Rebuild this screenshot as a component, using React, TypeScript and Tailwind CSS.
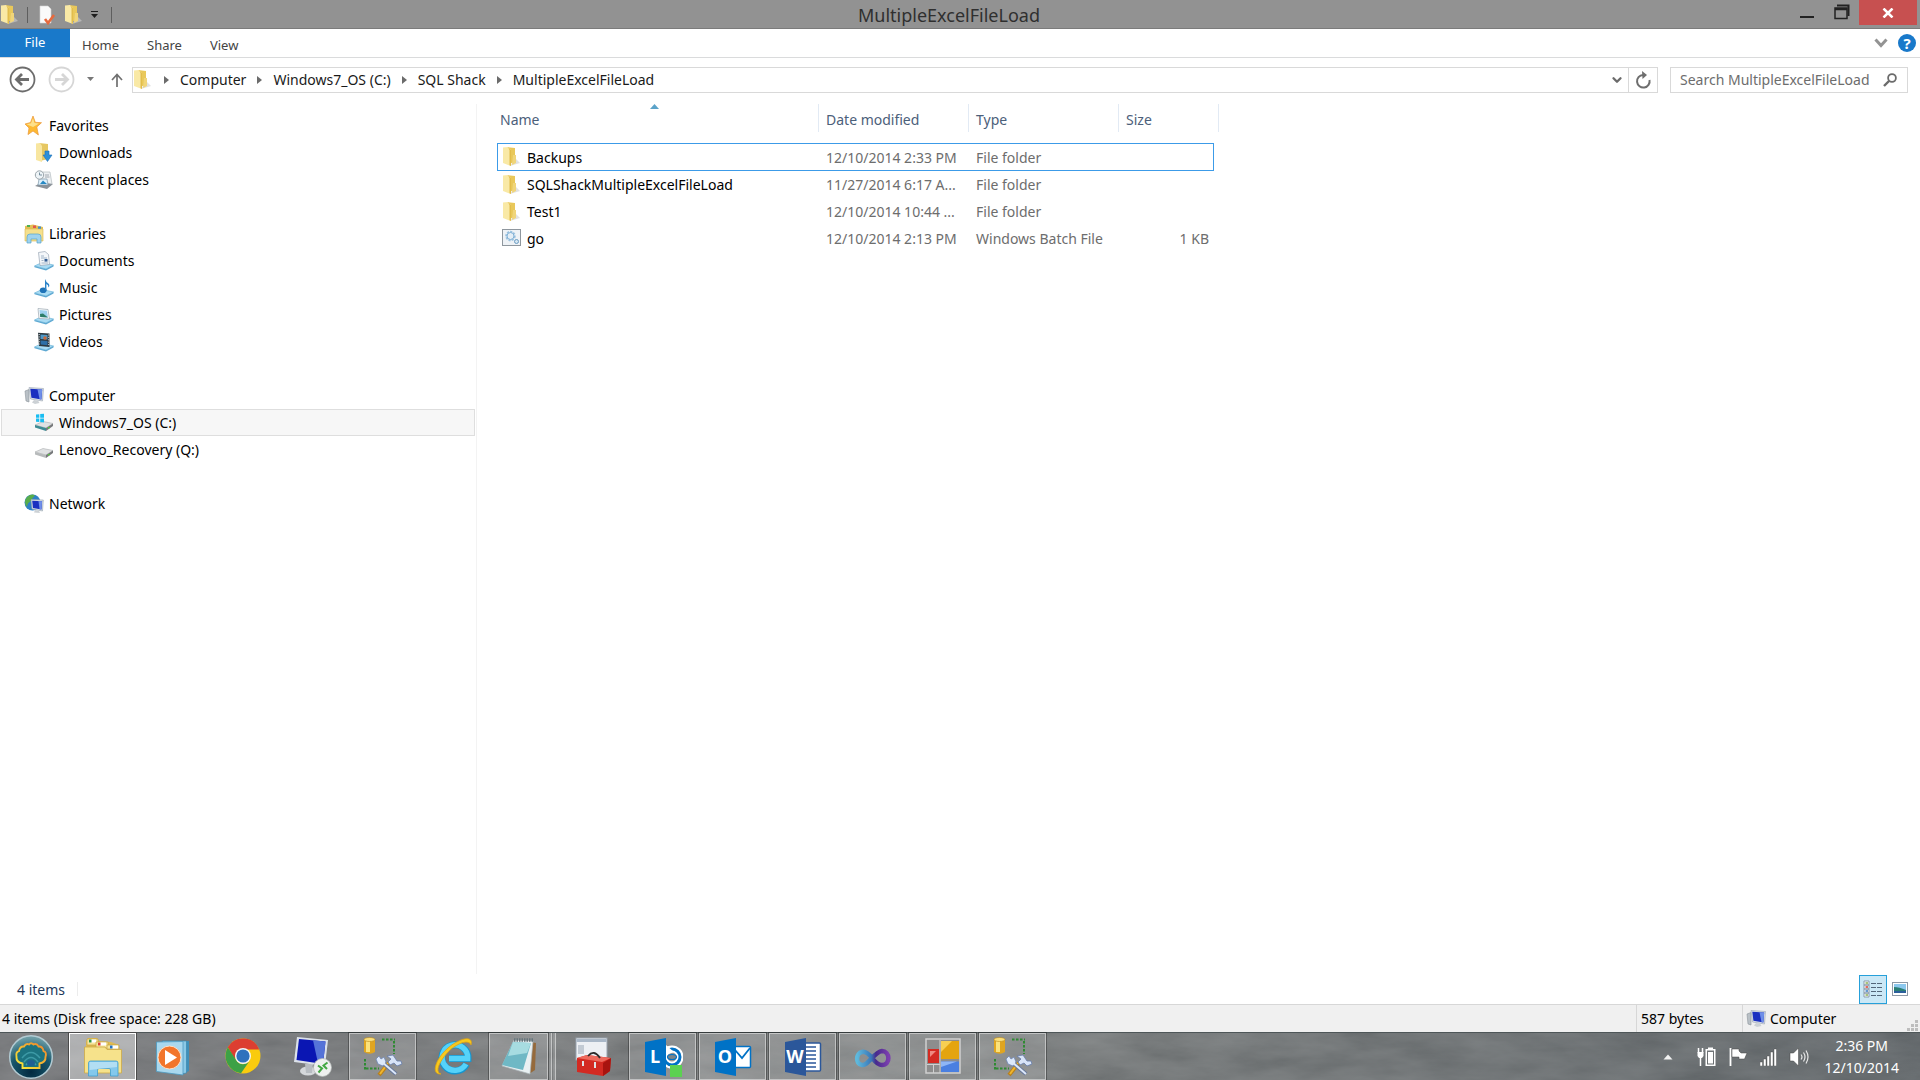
import type { ReactNode } from "react";
import { ChevronDown } from "lucide-react";

function FolderIcon() {
  return (
    <svg width="20" height="20" viewBox="0 0 20 20">
      <path d="M8 19 L18 16 L13 11 Z" fill="#cfcfcf" opacity="0.6" />
      <path d="M5 0 L13 1 L13 15 L6 17 Z" fill="#e9c85a" />
      <path d="M11 8 L14 8 L14 16 L10 18 Z" fill="#f0d57a" />
      <path d="M1 0.5 L6 0 L9 3 L9 19 L1 16 Z" fill="#f9e9a6" />
      <path d="M6 0 L9 3 L9 19 L7.5 18.3 L7.5 3 Z" fill="#e2bd4c" />
    </svg>
  );
}

function BatchIcon() {
  return (
    <svg width="20" height="20" viewBox="0 0 20 20">
      <rect x="0.5" y="0.5" width="18" height="16" fill="#eef2f6" stroke="#8f979e" />
      <circle cx="8.5" cy="7" r="4" fill="none" stroke="#9cc3e0" strokeWidth="2.5" strokeDasharray="2 1" />
      <circle cx="8.5" cy="7" r="3.5" fill="#e4eef6" stroke="#7fb0d6" />
      <circle cx="14.5" cy="12.5" r="2" fill="#d5e6f2" stroke="#6c9cc2" />
    </svg>
  );
}

function StarIcon() {
  return (
    <svg width="20" height="20" viewBox="0 0 20 20">
      <path d="M9 0 L11.3 6.3 L17.5 6.7 L12.8 11 L14.4 19 L9 15 L4 18.6 L5 12 L1 8 L6.5 6.5 Z" fill="#fdb932" stroke="#e9973a" strokeWidth="0.7" />
      <path d="M9 2 L10.5 7 L15 7.5 L9 11 L2.5 8.3 L7 7.2 Z" fill="#fde08a" />
    </svg>
  );
}

function DownloadsIcon() {
  return (
    <svg width="20" height="20" viewBox="0 0 20 20">
      <path d="M5 0 L14 1 L14 16 L6 18 Z" fill="#e6c762" />
      <path d="M2 0.5 L6 0 L8 3 L8 19 L2 17 Z" fill="#f8e6a0" />
      <path d="M11 8 H15 V12 H18 L13.5 18.5 L9 12 H11 Z" fill="#2d8fd8" stroke="#1c6fb5" strokeWidth="0.6" />
    </svg>
  );
}

function RecentIcon() {
  return (
    <svg width="20" height="20" viewBox="0 0 20 20">
      <path d="M1 16 L8 12 L19 14 L13 19 Z" fill="#8a9198" />
      <path d="M8 2 H16 L18 14 L8 12 Z" fill="#eef1f3" stroke="#a9b1b7" strokeWidth="0.6" />
      <path d="M11 5 H15 M11 7 H15.5" stroke="#8d979e" strokeWidth="0.8" />
      <path d="M5 9 H13 L14 15 H4 Z" fill="#dff0fb" stroke="#7c97a8" strokeWidth="0.7" />
      <path d="M6 14 L9 10.5 L13 14 Z" fill="#2789c4" />
      <circle cx="5.5" cy="5" r="4.2" fill="#eef4f7" stroke="#9ba5ab" />
      <path d="M5.5 2.5 V5 H8" fill="none" stroke="#6c8796" strokeWidth="0.9" />
    </svg>
  );
}

function LibrariesIcon() {
  return (
    <svg width="20" height="20" viewBox="0 0 20 20">
      <path d="M1 2 L9 0.5 L19 3 V17 H1 Z" fill="#e3bf55" />
      <path d="M3 1 H6 V3 H3 Z" fill="#4caf50" />
      <path d="M9 1.5 H12 V4 H9 Z" fill="#e2574c" />
      <path d="M14 2.5 H17 V5 H14 Z" fill="#3f8fd0" />
      <path d="M1 5 H19 V17 H1 Z" fill="#f5e08d" stroke="#d9b64f" strokeWidth="0.6" />
      <path d="M3 19 V13 Q3 10 6 10 H14 Q17 10 17 13 V19 H13 V15 H7 V19 Z" fill="#9fd3ef" stroke="#58a4cc" strokeWidth="0.7" />
    </svg>
  );
}

function Tray() {
  return (
    <>
      <path d="M0.5 15 L8 11.5 L19.5 14 L12 18 Z" fill="#a9dcf4" stroke="#6fb6da" strokeWidth="0.7" />
      <path d="M0.5 15 L12 18 L19.5 14 V15.5 L12 19.5 L0.5 16.2 Z" fill="#5ea9d2" />
    </>
  );
}

function DocumentsIcon() {
  return (
    <svg width="20" height="20" viewBox="0 0 20 20">
      <Tray />
      <path d="M4.5 1.5 L11 0.5 L14.5 3.5 L15.5 13.5 L6 14.5 Z" fill="#f4f7fa" stroke="#98a5b3" strokeWidth="0.7" />
      <path d="M7 5 H10 M7 7 H13 M7.5 9.5 H9.5 M7.5 12 H14" stroke="#8ea4bb" strokeWidth="0.8" />
      <rect x="10.5" y="8" width="3" height="2.6" fill="#315c93" />
    </svg>
  );
}

function MusicIcon() {
  return (
    <svg width="20" height="20" viewBox="0 0 20 20">
      <Tray />
      <ellipse cx="9.2" cy="12.3" rx="3.4" ry="2.8" fill="#1e73b8" />
      <path d="M11 12 V1 Q12 4.5 15 6 Q16 8 14.5 9.5 Q14.5 6.8 12.4 6 V12 Z" fill="#2a83c9" />
    </svg>
  );
}

function PicturesIcon() {
  return (
    <svg width="20" height="20" viewBox="0 0 20 20">
      <Tray />
      <path d="M4 3.5 L14 4.5 L15.5 14 L5 13.5 Z" fill="#f7f9fa" stroke="#9ba8b1" strokeWidth="0.7" />
      <path d="M5.5 5 L13 5.7 L14 12.6 L6.2 12 Z" fill="#9ed0ee" />
      <path d="M6 9 L9 8.5 L14 12.6 L6.2 12 Z" fill="#2d7d68" />
    </svg>
  );
}

function VideosIcon() {
  return (
    <svg width="20" height="20" viewBox="0 0 20 20">
      <Tray />
      <path d="M4 0.8 L15.5 1.5 V15 L5 14 Z" fill="#2d3940" />
      <path d="M6.5 2.5 L13.5 3 V7.5 L6.5 7 Z" fill="#4d98c8" />
      <path d="M6.5 8.5 L13.5 9 V13.2 L6.7 12.6 Z" fill="#2e6fa6" />
      <circle cx="11" cy="6" r="1.8" fill="#c96a3c" />
      <path d="M5.2 2 V14 M14.7 2.5 V14.5" stroke="#dfe5e8" strokeDasharray="1 1.4" />
    </svg>
  );
}

function ComputerIcon() {
  return (
    <svg width="20" height="20" viewBox="0 0 20 20">
      <path d="M1 5 L5 3.5 V16 L2 15 Z" fill="#b9c0c6" stroke="#8b949b" strokeWidth="0.6" />
      <path d="M5 1.5 L19.5 2.5 L18.5 15 L6.5 13 Z" fill="#d9dfe6" stroke="#9aa5b1" strokeWidth="0.6" />
      <path d="M6.3 2.8 L18.2 3.6 L17.4 13.4 L7.4 11.8 Z" fill="#1a2fc0" />
      <path d="M13.5 3.3 L18.2 3.6 L17.4 13.4 L15.5 13.1 Z" fill="#6f8fe8" />
      <path d="M10 14 L14 14.6 L15.5 17 L11 18 L8 16.5 Z" fill="#ccd1d5" />
    </svg>
  );
}

function DriveIcon({ windows = false }: { windows?: boolean }) {
  return (
    <svg width="20" height="20" viewBox="0 0 20 20">
      <path d="M1 12 L9 8.5 L19 10.5 L12 15 Z" fill="#e0e2e3" stroke="#a9adaf" strokeWidth="0.6" />
      <path d="M1 12 L12 15 V18 L1 14.5 Z" fill={windows ? "#3f8b93" : "#b7babb"} />
      <path d="M12 15 L19 10.5 V13 L12 18 Z" fill="#77797b" />
      <rect x="14" y="14" width="1.6" height="1.4" fill="#55d13a" />
      {windows && (
        <path d="M2 1.5 L5.3 1.2 V4.8 H2 Z M6.2 1 L10 0.7 V4.8 H6.2 Z M2 5.6 H5.3 V9 L2 8.7 Z M6.2 5.6 H10 V9.5 L6.2 9.1 Z" fill="#19bdf2" />
      )}
    </svg>
  );
}

function NetworkIcon() {
  return (
    <svg width="20" height="20" viewBox="0 0 20 20">
      <circle cx="8.5" cy="8.5" r="8" fill="#2f80c6" />
      <path d="M3 3 Q8 -1 11 1.5 Q8 4 7 7 Q3 9 3 13 Q-1 8 3 3 Z" fill="#58ad4b" />
      <path d="M7 5.5 L19.3 6 L18.5 17 L8 15 Z" fill="#d9dfe6" stroke="#96a2ad" strokeWidth="0.6" />
      <path d="M8.2 6.8 L18.1 7.2 L17.5 15.6 L9 14 Z" fill="#1a2fc0" />
      <path d="M14.5 7 L18.1 7.2 L17.5 15.6 L15.5 15.2 Z" fill="#6f8fe8" />
      <path d="M11 16 L15 16.7 L16 19 L10 18.5 Z" fill="#ccd1d5" />
    </svg>
  );
}

function PropertiesIcon() {
  return (
    <svg width="18" height="20" viewBox="0 0 18 20">
      <path d="M2 1 H10 L13 4 V18 H2 Z" fill="#fafafa" stroke="#d3d3d3" strokeWidth="0.6" />
      <path d="M7 14 L10 18 L16 10" fill="none" stroke="#e8693c" strokeWidth="2.6" />
    </svg>
  );
}

/* taskbar program icons, all on a 40px grid */

function StartOrb() {
  return (
    <svg width="46" height="46" viewBox="0 0 46 46">
      <defs>
        <radialGradient id="orb" cx="50%" cy="85%" r="80%">
          <stop offset="0" stopColor="#032a40" />
          <stop offset="0.6" stopColor="#17566b" />
          <stop offset="1" stopColor="#6d9da6" />
        </radialGradient>
        <linearGradient id="shell" x1="0" y1="1" x2="1" y2="0">
          <stop offset="0" stopColor="#f6ee3c" />
          <stop offset="1" stopColor="#f0822a" />
        </linearGradient>
      </defs>
      <circle cx="23" cy="23" r="21.3" fill="url(#orb)" stroke="#b3cbd3" strokeWidth="1.5" />
      <path d="M14.5 34 V29.5 Q8 28 8.5 23 Q7.5 18 11 17 Q12 12 16 12.5 Q18 9 21 10.5 Q23 8 25.5 10.5 Q29 9 30.5 12.5 Q34.5 12 35.5 17 Q39 18 37.5 23 Q38 28 31.5 29.5 V34 Z" fill="#1c7380" stroke="url(#shell)" strokeWidth="1.9" />
      <path d="M14 24 Q23 13 32 24 M16 28 Q23 19 30 28 M18 31 Q23 24 28 31" fill="none" stroke="#3d9aa6" strokeWidth="1.5" />
      <ellipse cx="23" cy="29" rx="4" ry="3" fill="#1f5f93" />
    </svg>
  );
}

function ExplorerIcon() {
  return (
    <svg width="40" height="40" viewBox="0 0 40 40">
      <path d="M3 5 L5 1 H14 L16 4 L28 5 L36 8 V34 H3 Z" fill="#dfbb52" />
      <path d="M4 2 H15 V8 H4 Z" fill="#f5e49b" stroke="#c9a341" strokeWidth="0.7" />
      <rect x="6" y="2.5" width="7" height="3" fill="#fff" />
      <rect x="6" y="2.5" width="2.5" height="3" fill="#2d9442" />
      <path d="M13 5 H25 V11 H13 Z" fill="#f5e49b" stroke="#c9a341" strokeWidth="0.7" />
      <rect x="15" y="5.5" width="8" height="3" fill="#fff" />
      <rect x="15" y="5.5" width="2.5" height="3" fill="#dd3d2c" />
      <path d="M24 8 H36 V12 H24 Z" fill="#f5e49b" stroke="#c9a341" strokeWidth="0.7" />
      <rect x="27" y="8.5" width="8" height="3" fill="#fff" />
      <rect x="27" y="8.5" width="2.5" height="3" fill="#2573bf" />
      <path d="M1.5 10 H22 L24 12.5 H38.5 V36 H1.5 Z" fill="#f6e28b" stroke="#cda947" strokeWidth="0.8" />
      <path d="M5.5 39 V26 Q5.5 24 7.5 24 H33 Q35 24 35 26 V39 H27.5 V33 Q27.5 31.5 26 31.5 H16 Q14.5 31.5 14.5 33 V39 Z" fill="#84c8ec" stroke="#3f9ed0" strokeWidth="0.8" />
      <path d="M6.5 25 H34 V30 L6.5 33 Z" fill="#c6e7f7" opacity="0.7" />
    </svg>
  );
}

function MediaPlayerIcon() {
  return (
    <svg width="40" height="40" viewBox="0 0 40 40">
      <path d="M12 4 H36 V34 L30 37 Z" fill="#3f8fb8" />
      <path d="M9 4 H33.5 V36 L28 37 Z" fill="#8cc9e6" stroke="#3b87ad" strokeWidth="0.7" />
      <path d="M3.5 5 L30 4.5 V38 L3.5 34.5 Z" fill="#a9d8ee" stroke="#4c9ac1" strokeWidth="0.8" />
      <circle cx="16.5" cy="20.5" r="11.5" fill="#f2752b" stroke="#fde2cc" strokeWidth="1" />
      <path d="M12 13 L24 20.5 L12 28 Z" fill="#fff" />
    </svg>
  );
}

function ChromeIcon() {
  return (
    <svg width="40" height="40" viewBox="0 0 40 40">
      <circle cx="20" cy="19" r="17.5" fill="#f9cb0d" />
      <path d="M4.8 10.3 A17.5 17.5 0 0 1 36.3 12.5 H20 A8 8 0 0 0 12.8 23.5 Z" fill="#dc3e31" />
      <path d="M4.8 10.3 A17.5 17.5 0 0 0 18 36.3 L26.5 24 A8 8 0 0 1 12.8 22.5 Z" fill="#3da146" />
      <circle cx="20" cy="19" r="8" fill="#f3f6f8" />
      <circle cx="20" cy="19" r="6.6" fill="#2f72bd" />
    </svg>
  );
}

function RemoteDesktopIcon() {
  return (
    <svg width="40" height="40" viewBox="0 0 40 40">
      <ellipse cx="15" cy="34" rx="8" ry="4.5" fill="#d5d8db" />
      <path d="M12 27 H20 L19 36 H13 Z" fill="#b8bdc2" />
      <path d="M4 0 L35 3 L32 29 L1 25 Z" fill="#dce2ea" />
      <path d="M6 2 L32.5 4.5 L30 27 L3.5 23 Z" fill="#0a16b3" />
      <path d="M20 3.3 L32.5 4.5 L30 27 L25 26.2 Z" fill="#5573d8" />
      <circle cx="29.5" cy="30.5" r="9" fill="#eef0ef" stroke="#b4b9b8" strokeWidth="0.7" />
      <path d="M25 28.5 L29 31.5 L25.5 35.5 M34.5 25.5 L30.5 28.5 L34 32" fill="none" stroke="#43a843" strokeWidth="2" />
    </svg>
  );
}

function SqlStudioIcon() {
  return (
    <svg width="40" height="40" viewBox="0 0 40 40">
      <path d="M1 2 V15 Q7 18.5 12 15 V2 Z" fill="#e0a520" />
      <path d="M3 3 V15 H7 V3 Z" fill="#fbe27c" />
      <ellipse cx="6.5" cy="2.5" rx="5.5" ry="2" fill="#fbdf7a" stroke="#b88717" strokeWidth="0.6" />
      <path d="M19 2.5 H32 M31 4 V17 M2 22 V33 M3 31.5 H16" fill="none" stroke="#2f8a33" strokeWidth="2" strokeDasharray="2.5 1.5" />
      <path d="M26 26 L16 38" stroke="#b9801a" strokeWidth="4" />
      <path d="M25 26 L17 37" stroke="#efb62e" strokeWidth="2" />
      <path d="M20 26 L33 37" stroke="#66779a" strokeWidth="4" />
      <path d="M13 22 L16 19 L18 22 L21 20 L23 25 L20 29 L15 27 Z" fill="#dce8fa" stroke="#6e86b5" strokeWidth="0.8" />
      <path d="M19 25 L33 37" stroke="#dce8fa" strokeWidth="2" />
      <path d="M24 19 L30 18 L34 24 L38 24 L39 27 L34 29 L31 26 L27 28 L25 25 L28 22 Z" fill="#d8e4f7" stroke="#667ca9" strokeWidth="0.8" />
    </svg>
  );
}

function InternetExplorerIcon() {
  return (
    <svg width="40" height="40" viewBox="0 0 40 40">
      <path d="M33.5 27 A13 13 0 1 1 35 21.5 H16" fill="none" stroke="#1595cf" strokeWidth="7" />
      <path d="M33 27 A12.8 12.8 0 1 1 34.7 21.5 H16" fill="none" stroke="#55d3fa" strokeWidth="5.4" />
      <path d="M8 37 C-3 38 3 21 15 11 C25 2 41 -3 38 8 C36 2 25 6 17 13 C7 23 1 35 8 37 Z" fill="#f9c91c" stroke="#dda315" strokeWidth="0.8" />
    </svg>
  );
}

function NotepadIcon() {
  return (
    <svg width="40" height="40" viewBox="0 0 40 40">
      <path d="M31 5 L37 6 L36 33 L30 37 Z" fill="#956a3c" />
      <path d="M15 3 L34 4 L31 37 L3 29 Z" fill="#e9f0f2" stroke="#aab5b9" strokeWidth="0.7" />
      <path d="M14 5 L32 6 L24 33 L3 28 Z" fill="#6fb8c5" />
      <path d="M14 5 L32 6 L28 16 L9 19 Z" fill="#a7dce1" />
      <path d="M15 3 H34" stroke="#65757c" strokeWidth="3.5" strokeDasharray="1.5 1" />
    </svg>
  );
}

function ToolboxIcon() {
  return (
    <svg width="40" height="40" viewBox="0 0 40 40">
      <rect x="3" y="1" width="31" height="22" fill="#edf0f4" stroke="#98a2ad" />
      <path d="M3.5 2 H33.5 V5 H3.5 Z" fill="#aab8c8" />
      <path d="M5 8 H11 V17 H5 Z" fill="#c2cad3" />
      <path d="M4 21 L14 18 L38 21 L37 34 L30 39 L4 35 Z" fill="#d32a22" />
      <path d="M4 21 L14 18 L38 21 L29 25 Z" fill="#ee6a5d" />
      <path d="M30 26 L38 21 L37 34 L30 39 Z" fill="#a8140f" />
      <path d="M15 19 Q21 12 27 21" fill="none" stroke="#2b2b2b" strokeWidth="1.8" />
      <path d="M10 24 V29 M22 25 V31" stroke="#dfe3e5" strokeWidth="2" />
    </svg>
  );
}

/* the Office tiles share a slanted door with a letter on it */
function OfficeIcon({ letter, color, children }: { letter: string; color: string; children: ReactNode }) {
  return (
    <svg width="40" height="40" viewBox="0 0 40 40">
      {children}
      <path d="M2 5 L23 1 V39 L2 35 Z" fill={color} />
      <text x="12" y="26" textAnchor="middle" fill="#fff" className="font-['Open_Sans',sans-serif] text-[18px] font-bold">
        {letter}
      </text>
    </svg>
  );
}

function LyncIcon() {
  return (
    <OfficeIcon letter="L" color="#0072c6">
      <circle cx="29" cy="20" r="8" fill="none" stroke="#fff" strokeWidth="7" />
      <circle cx="29" cy="20" r="8" fill="none" stroke="#0072c6" strokeWidth="3" />
      <ellipse cx="29" cy="20" rx="4.5" ry="2.5" fill="#7d8488" stroke="#0072c6" strokeWidth="1.2" />
      <path d="M23 8 L31 15 L23 18 Z" fill="#fff" />
      <rect x="27" y="28" width="12" height="12" fill="#5bd151" />
    </OfficeIcon>
  );
}

function OutlookIcon() {
  return (
    <OfficeIcon letter="O" color="#0072c6">
      <rect x="20" y="9.5" width="17.5" height="21" rx="1" fill="#fff" stroke="#0072c6" strokeWidth="1.5" />
      <path d="M22 13 L29 21 L37 11" fill="none" stroke="#0072c6" strokeWidth="1.8" />
    </OfficeIcon>
  );
}

function WordIcon() {
  return (
    <OfficeIcon letter="W" color="#2b579a">
      <rect x="20" y="6" width="17.5" height="28" rx="1" fill="#fff" stroke="#2b579a" strokeWidth="1.5" />
      <path d="M22 10 H33 M22 14 H33 M22 18 H33 M22 22 H33 M22 26 H33 M22 30 H33" stroke="#2b579a" strokeWidth="1.6" />
    </OfficeIcon>
  );
}

function VisualStudioIcon() {
  return (
    <svg width="40" height="40" viewBox="0 0 40 40">
      <defs>
        <linearGradient id="loop" x1="0" x2="1">
          <stop offset="0" stopColor="#5fb9dc" />
          <stop offset="0.45" stopColor="#3a78b8" />
          <stop offset="0.6" stopColor="#472a8c" />
          <stop offset="1" stopColor="#7b3fae" />
        </linearGradient>
      </defs>
      <path d="M20 22 C15 16 12 14 9 15 C3 16 2 27 9 28 C15 29 21 15 29 14 C37 14 38 28 29 28 C26 28 23 26 20 22 Z" fill="none" stroke="url(#loop)" strokeWidth="4.5" />
    </svg>
  );
}

function BlocksIcon() {
  return (
    <svg width="40" height="40" viewBox="0 0 40 40">
      <rect x="3" y="2" width="34" height="34" fill="#8d8d8d" stroke="#d0d0d0" strokeWidth="1.5" />
      <rect x="18" y="4" width="18" height="18" fill="#e4a40f" />
      <path d="M18 4 H29 L18 15 Z" fill="#f7cf52" />
      <rect x="5" y="12" width="11" height="14" fill="#d42b22" />
      <path d="M7 14 H13 L7 20 Z" fill="#ef8a80" />
      <rect x="18" y="24.5" width="18" height="10.5" fill="#4a7fe0" />
      <path d="M18 24.5 H34 L18 30 Z" fill="#8fb6f5" />
      <path d="M4 27.5 H17 M10.5 27 V36 M17 3 V36" stroke="#d0d0d0" />
    </svg>
  );
}

const crumbs = ["Computer", "Windows7_OS (C:)", "SQL Shack", "MultipleExcelFileLoad"];

const navGroups = [
  {
    label: "Favorites",
    icon: <StarIcon />,
    items: [
      { label: "Downloads", icon: <DownloadsIcon /> },
      { label: "Recent places", icon: <RecentIcon /> },
    ],
  },
  {
    label: "Libraries",
    icon: <LibrariesIcon />,
    items: [
      { label: "Documents", icon: <DocumentsIcon /> },
      { label: "Music", icon: <MusicIcon /> },
      { label: "Pictures", icon: <PicturesIcon /> },
      { label: "Videos", icon: <VideosIcon /> },
    ],
  },
  {
    label: "Computer",
    icon: <ComputerIcon />,
    items: [
      { label: "Windows7_OS (C:)", icon: <DriveIcon windows />, active: true },
      { label: "Lenovo_Recovery (Q:)", icon: <DriveIcon /> },
    ],
  },
  { label: "Network", icon: <NetworkIcon />, items: [] },
];

const files = [
  { name: "Backups", date: "12/10/2014 2:33 PM", type: "File folder", size: "", focused: true },
  { name: "SQLShackMultipleExcelFileLoad", date: "11/27/2014 6:17 A...", type: "File folder", size: "" },
  { name: "Test1", date: "12/10/2014 10:44 ...", type: "File folder", size: "" },
  { name: "go", date: "12/10/2014 2:13 PM", type: "Windows Batch File", size: "1 KB" },
];

const programs = [
  { name: "File Explorer", icon: <ExplorerIcon />, state: "active" },
  { name: "Media Player", icon: <MediaPlayerIcon />, state: "" },
  { name: "Chrome", icon: <ChromeIcon />, state: "" },
  { name: "Remote Desktop", icon: <RemoteDesktopIcon />, state: "" },
  { name: "Management Studio", icon: <SqlStudioIcon />, state: "open" },
  { name: "Internet Explorer", icon: <InternetExplorerIcon />, state: "" },
  { name: "Notepad", icon: <NotepadIcon />, state: "stacked" },
  { name: "Configuration Tools", icon: <ToolboxIcon />, state: "" },
  { name: "Lync", icon: <LyncIcon />, state: "open" },
  { name: "Outlook", icon: <OutlookIcon />, state: "open" },
  { name: "Word", icon: <WordIcon />, state: "open" },
  { name: "Visual Studio", icon: <VisualStudioIcon />, state: "open" },
  { name: "Server Tools", icon: <BlocksIcon />, state: "open" },
  { name: "Management Studio", icon: <SqlStudioIcon />, state: "open" },
];

function Crumb({ label }: { label: string }) {
  return (
    <div className="flex items-center">
      <span className="flex w-[27px] justify-center">
        <svg width="5" height="8" viewBox="0 0 5 8"><path d="M0 0 L5 4 L0 8 Z" fill="#6b6b6b" /></svg>
      </span>
      <button>{label}</button>
    </div>
  );
}

function TitleBar() {
  return (
    <header className="grid h-[29px] shrink-0 grid-cols-[1fr_auto_1fr] border-b border-[#7b7b7b] bg-[#929292]">
      <div className="flex items-center">
        <FolderIcon />
        <span className="ml-[7px] h-4 w-px bg-[#5e5e5e]" />
        <button className="ml-[10px]" aria-label="Properties"><PropertiesIcon /></button>
        <button className="ml-2" aria-label="New folder"><FolderIcon /></button>
        <button className="ml-[7px]" aria-label="Customize Quick Access Toolbar">
          <svg width="8" height="8" viewBox="0 0 8 8"><path d="M0 0.5 H7" stroke="#1e1e1e" /><path d="M0 3 H7 L3.5 7 Z" fill="#1e1e1e" /></svg>
        </button>
        <span className="ml-3 h-4 w-px bg-[#5e5e5e]" />
      </div>
      <h1 className="mr-[22px] text-[18px] leading-[30px] text-[#2f2f2f]">MultipleExcelFileLoad</h1>
      <div className="flex items-start justify-end pr-[3px]">
        <button className="p-3 pb-0" aria-label="Minimize">
          <span className="mt-1 block h-[2px] w-[14px] bg-[#222]" />
        </button>
        <button className="px-2 pt-1 pr-[9px]" aria-label="Restore">
          <svg width="16" height="16" viewBox="0 0 16 16">
            <path d="M3 1.5 H14.5 V12" fill="none" stroke="#222" strokeWidth="2" />
            <path d="M1 4 H13 V14.5 H1 Z M1 5.5 H13" fill="none" stroke="#222" strokeWidth="1.5" />
          </svg>
        </button>
        <button className="flex h-[25px] w-[58px] items-center justify-center bg-[#c75050]" aria-label="Close">
          <svg width="12" height="10" viewBox="0 0 12 10"><path d="M1.5 0.5 L10.5 9.5 M10.5 0.5 L1.5 9.5" stroke="#fff" strokeWidth="2.5" /></svg>
        </button>
      </div>
    </header>
  );
}

function Ribbon() {
  return (
    <nav className="flex h-[29px] shrink-0 items-stretch border-b border-[#dadbdc] text-[13px] text-[#444]">
      <button className="w-[70px] bg-[#1979ca] text-white">File</button>
      <button className="pt-[6px] pl-3">Home</button>
      <button className="pt-[6px] pl-7">Share</button>
      <button className="pt-[6px] pl-7">View</button>
      <div className="ml-auto flex items-center gap-[10px] pr-1">
        <button aria-label="Expand the Ribbon">
          <svg width="14" height="10" viewBox="0 0 14 10"><path d="M1.5 1.5 L7 7.5 L12.5 1.5" fill="none" stroke="#939393" strokeWidth="3" /></svg>
        </button>
        <button className="size-[18px] rounded-full bg-[#1979ca] text-[15px] leading-[18px] font-bold text-white" aria-label="Help">?</button>
      </div>
    </nav>
  );
}

function AddressRow() {
  return (
    <div className="flex shrink-0 items-center pt-2 pr-3 pb-[10px] pl-[9px]">
      <button aria-label="Back">
        <svg width="27" height="27" viewBox="0 0 27 27">
          <circle cx="13.5" cy="13.5" r="12" fill="none" stroke="#6d6d6d" strokeWidth="1.8" />
          <path d="M20 13.5 H8 M13 8 L7.5 13.5 L13 19" fill="none" stroke="#6d6d6d" strokeWidth="2.8" />
        </svg>
      </button>
      <button className="ml-3" aria-label="Forward">
        <svg width="27" height="27" viewBox="0 0 27 27">
          <circle cx="13.5" cy="13.5" r="12" fill="none" stroke="#d6d6d6" strokeWidth="1.8" />
          <path d="M7 13.5 H19 M14 8 L19.5 13.5 L14 19" fill="none" stroke="#d6d6d6" strokeWidth="2.8" />
        </svg>
      </button>
      <button className="ml-3" aria-label="Recent locations">
        <svg width="7" height="5" viewBox="0 0 7 5"><path d="M0 0 H7 L3.5 4 Z" fill="#777" /></svg>
      </button>
      <button className="ml-[17px]" aria-label="Up">
        <svg width="12" height="14" viewBox="0 0 12 14"><path d="M6 14 V2 M1 7 L6 1.5 L11 7" fill="none" stroke="#707070" strokeWidth="1.7" /></svg>
      </button>
      <div className="ml-[9px] flex h-[26px] flex-1 items-center border border-[#d9d9d9] text-[14px] text-[#1a1a1a]">
        <FolderIcon />
        {crumbs.map((c) => <Crumb key={c} label={c} />)}
        <button className="mr-1 ml-auto" aria-label="Previous locations"><ChevronDown size={14} strokeWidth={4} color="#6b6b6b" /></button>
        <button className="flex h-full w-[29px] items-center justify-center border-l border-[#d9d9d9]" aria-label="Refresh">
          <svg width="18" height="18" viewBox="0 0 18 18">
            <path d="M15.5 9 A6.3 6.3 0 1 1 9 4" fill="none" stroke="#6e6e6e" strokeWidth="2" />
            <path d="M8 0 L13 4 L8.5 8 Z" fill="#6e6e6e" />
          </svg>
        </button>
      </div>
      <form className="ml-3 flex h-[26px] w-[238px] items-center border border-[#d9d9d9] pr-[10px] pl-[9px]">
        <input type="text" aria-label="Search" placeholder="Search MultipleExcelFileLoad" className="min-w-0 flex-1 text-[14px] outline-none placeholder:text-[#6d6d6d]" />
        <button aria-label="Start search">
          <svg width="14" height="14" viewBox="0 0 14 14">
            <circle cx="9" cy="5" r="3.9" fill="none" stroke="#6b6b6b" strokeWidth="1.8" />
            <path d="M6 8 L1 13" stroke="#6b6b6b" strokeWidth="2.4" />
          </svg>
        </button>
      </form>
    </div>
  );
}

function Sidebar() {
  return (
    <aside className="w-[477px] shrink-0 border-r border-[#f3f3f3] pt-2 pr-px pl-px text-[14px] leading-[25px] text-black">
      {navGroups.map((group) => (
        <div key={group.label} className="mb-[27px]">
          <a href="#" className="flex items-center gap-[5px] border border-transparent pl-[22px]">
            {group.icon}
            {group.label}
          </a>
          {group.items.map((item) => (
            <a
              key={item.label}
              href="#"
              className={
                "active" in item
                  ? "flex items-center gap-[5px] border border-[#dedede] bg-[#f7f7f7] pl-8"
                  : "flex items-center gap-[5px] border border-transparent pl-8"
              }
            >
              {item.icon}
              {item.label}
            </a>
          ))}
        </div>
      ))}
    </aside>
  );
}

function FileTable() {
  return (
    <table className="ml-5 w-[722px] table-fixed border-separate border-spacing-0 self-start text-[14px] leading-[25px] text-[#6d6d6d]">
      <colgroup>
        <col className="w-[322px]" />
        <col className="w-[150px]" />
        <col className="w-[150px]" />
        <col className="w-[95px]" />
        <col className="w-[5px]" />
      </colgroup>
      <thead className="text-left text-[#4c607a]">
        <tr className="h-7">
          <th className="relative border-r border-[#e2eaf4] pt-[2px] pl-[3px] font-normal">
            Name
            <svg className="absolute top-0 left-[153px]" width="9" height="5" viewBox="0 0 9 5"><path d="M0 5 L4.5 0 L9 5 Z" fill="#5ba3c9" /></svg>
          </th>
          <th className="border-r border-[#e2eaf4] pt-[2px] pl-[7px] font-normal">Date modified</th>
          <th className="border-r border-[#e2eaf4] pt-[2px] pl-[7px] font-normal">Type</th>
          <th colSpan={2} className="border-r border-[#e2eaf4] pt-[2px] pl-[7px] font-normal">Size</th>
        </tr>
        <tr className="h-[11px]" />
      </thead>
      <tbody>
        {files.map((file) => (
          <tr
            key={file.name}
            className={
              file.focused
                ? "h-7 whitespace-nowrap *:border-y *:border-[#3c9be8] [&>*:first-child]:border-l [&>*:last-child]:border-r"
                : "h-[27px] whitespace-nowrap *:border-y *:border-transparent [&>*:first-child]:border-l [&>*:last-child]:border-r"
            }
          >
            <td className="pl-1 text-black">
              <span className="flex items-center gap-[5px]">
                {file.name === "go" ? <BatchIcon /> : <FolderIcon />}
                {file.name}
              </span>
            </td>
            <td className="pl-[7px]">{file.date}</td>
            <td className="pl-[7px]">{file.type}</td>
            <td className="pr-1 text-right">{file.size}</td>
          </tr>
        ))}
      </tbody>
    </table>
  );
}

function StatusBars() {
  return (
    <>
      <div className="flex h-[30px] shrink-0 items-center pr-3 pl-[17px] text-[14px] text-[#1e395b]">
        4 items
        <span className="ml-3 h-[14px] w-px bg-[#ececec]" />
        <div className="ml-auto flex items-center gap-[5px]">
          <button className="flex h-[29px] w-7 items-center justify-center border border-[#26a0da] bg-[#cbe8f6]" aria-label="Details view">
            <svg width="20" height="18" viewBox="0 0 20 18">
              <path d="M1 1 H6 V5 H1 Z M1 5 H6 V9 H1 Z M1 9 H6 V13 H1 Z M1 13 H6 V17 H1 Z" fill="#fff" stroke="#8b9bab" />
              <path d="M2.5 7 H5" stroke="#d93a2b" strokeWidth="1.5" />
              <path d="M2.5 11 H5" stroke="#3578c0" strokeWidth="1.5" />
              <path d="M2.5 3 H5 M2.5 15 H5" stroke="#8ab053" strokeWidth="1.5" />
              <path d="M8 3.5 H19 M8 7.5 H19 M8 11.5 H19 M8 15.5 H19" stroke="#54677a" strokeDasharray="5 1" />
            </svg>
          </button>
          <button aria-label="Large icons view">
            <svg width="16" height="14" viewBox="0 0 16 14">
              <rect x="0.5" y="0.5" width="15" height="13" fill="#fff" stroke="#8e99a6" />
              <path d="M2 2 H14 V10 H2 Z" fill="#8cc8ee" />
              <path d="M2 5 Q7 5 14 8 V10 H2 Z" fill="#2a7f74" />
              <path d="M2 9 H14 V11 H2 Z" fill="#2b5f9b" />
            </svg>
          </button>
        </div>
      </div>
      <footer className="flex h-7 shrink-0 items-stretch border-t border-[#d7d7d7] bg-[#f0f0f0] text-[14px] leading-[28px] text-black">
        <span className="flex-1 pl-[2px]">4 items (Disk free space: 228 GB)</span>
        <span className="w-[106px] border-l border-[#d7d7d7] pl-1">587 bytes</span>
        <span className="flex w-[178px] items-center gap-1 border-l border-[#d7d7d7] pl-[3px]">
          <ComputerIcon />
          Computer
          <svg className="mr-[2px] mb-px ml-auto self-end" width="11" height="11" viewBox="0 0 11 11">
            <path d="M0 8 H3 V11 H0 Z M4 8 H7 V11 H4 Z M8 8 H11 V11 H8 Z M4 4 H7 V7 H4 Z M8 4 H11 V7 H8 Z M8 0 H11 V3 H8 Z" fill="#bdbdbd" />
          </svg>
        </span>
      </footer>
    </>
  );
}

function StoneTexture() {
  return (
    <svg className="absolute inset-0 h-full w-full" aria-hidden="true">
      <filter id="stone" x="0" y="0" width="100%" height="100%">
        <feTurbulence type="fractalNoise" baseFrequency="0.015 0.05" numOctaves="5" seed="7" />
        <feColorMatrix values="0.5 0 0 0 0.140  0.5 0 0 0 0.155  0.5 0 0 0 0.160  0 0 0 0 1" />
      </filter>
      <rect width="100%" height="100%" filter="url(#stone)" opacity="0.3" />
    </svg>
  );
}

function Taskbar() {
  return (
    <footer className="relative h-12 shrink-0 bg-linear-to-r from-[#67686b] via-[#6b6e6e] to-[#4d5357]">
      <StoneTexture />
      <div className="relative flex h-full items-stretch border-t border-[#4e5658]">
        <button className="mr-[15px] ml-2" aria-label="Start"><StartOrb /></button>
        <div className="flex gap-[3px]">
          {programs.map((p, i) => {
            if (p.state === "active") {
              return (
                <button key={i} aria-label={p.name} className="flex w-[67px] items-center justify-center border border-white bg-white/40 outline outline-[#4b4b4b]">
                  {p.icon}
                </button>
              );
            }
            if (p.state === "open") {
              return (
                <button key={i} aria-label={p.name} className="flex w-[67px] items-center justify-center border border-white/45 bg-white/15 outline outline-black/30">
                  {p.icon}
                </button>
              );
            }
            if (p.state === "stacked") {
              return (
                <button key={i} aria-label={p.name} className="flex w-[67px] gap-px">
                  <span className="flex h-full flex-1 items-center justify-center border border-white/45 bg-white/15 outline outline-black/30">{p.icon}</span>
                  <span className="h-full w-[3px] border-r border-white/45 bg-white/15" />
                  <span className="h-full w-[3px] border-r border-white/45 bg-white/15" />
                </button>
              );
            }
            return (
              <button key={i} aria-label={p.name} className="flex w-[67px] items-center justify-center">
                {p.icon}
              </button>
            );
          })}
        </div>
        <div className="ml-auto flex items-center gap-3 pr-[21px] text-white">
          <button aria-label="Show hidden icons" className="mr-3">
            <svg width="10" height="6" viewBox="0 0 10 6"><path d="M0.5 5.5 L5 0.5 L9.5 5.5 Z" fill="#f2f2f2" /></svg>
          </button>
          <svg width="20" height="20" viewBox="0 0 20 20">
            <path d="M1.5 1 V6 M5.5 1 V6 M3.5 11 V19" stroke="#fff" strokeWidth="1.5" />
            <path d="M0.5 5 H6.5 V9 L5 11 H2 L0.5 9 Z" fill="#fff" />
            <path d="M8.5 2 H11 V0.5 H16 V2 H18.5 V19 H8.5 Z M10 3.5 V17.5 H17 V3.5 Z" fill="#fff" fillRule="evenodd" />
            <rect x="11" y="5" width="5" height="11.5" fill="#fff" />
          </svg>
          <svg width="19" height="20" viewBox="0 0 19 20">
            <path d="M1.5 1 V19" stroke="#fff" strokeWidth="1.8" />
            <path d="M3 2 H10 V4 L12 6 H18 L15.5 12 H10 V10 H3 Z" fill="#fff" stroke="#444" strokeWidth="0.5" />
          </svg>
          <svg width="17" height="18" viewBox="0 0 17 18">
            <path d="M0 14 H2.5 V18 H0 Z M3.5 11 H6 V18 H3.5 Z M7 8 H9.5 V18 H7 Z M10.5 4 H13 V18 H10.5 Z M14 1 H16.5 V18 H14 Z" fill="#fff" stroke="#444" strokeWidth="0.4" />
          </svg>
          <svg width="20" height="20" viewBox="0 0 20 20">
            <path d="M1 6 H4.5 L9.5 1 V19 L4.5 14 H1 Z" fill="#fff" stroke="#444" strokeWidth="0.5" />
            <path d="M12 7.5 Q14 10 12 12.5 M14.5 5.5 Q17.5 10 14.5 14.5 M17 3.5 Q21 10 17 16.5" fill="none" stroke="#e8e8e8" strokeWidth="1.2" />
          </svg>
          <time className="ml-1 text-center text-[14px] leading-[22px]" dateTime="2014-12-10T14:36">
            2:36 PM
            <br />
            12/10/2014
          </time>
        </div>
      </div>
    </footer>
  );
}

export default function App() {
  return (
    <div className="flex h-screen flex-col overflow-hidden bg-white font-['Noto_Sans','Open_Sans',sans-serif]">
      <TitleBar />
      <Ribbon />
      <AddressRow />
      <main className="flex min-h-0 flex-1 pt-px">
        <Sidebar />
        <FileTable />
      </main>
      <StatusBars />
      <Taskbar />
    </div>
  );
}
